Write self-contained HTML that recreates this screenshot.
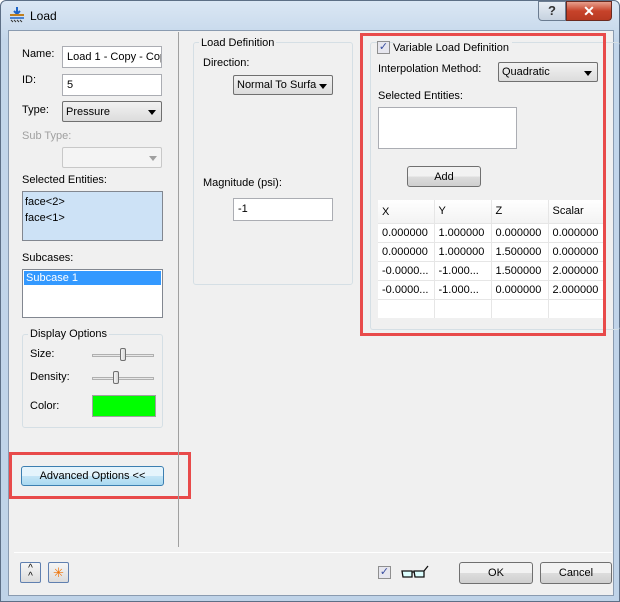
<!DOCTYPE html>
<html><head><style>
*{box-sizing:border-box}
body{margin:0;width:620px;height:602px;overflow:hidden;font-family:"Liberation Sans",sans-serif;font-size:11px;color:#000;background:#fff}
.win{position:absolute;left:0;top:0;width:620px;height:602px;background:linear-gradient(#dbe7f4,#c3d6ea 40px,#bfd3e8);border:1px solid #5d6f86;border-radius:6px 6px 0 0}
.client{position:absolute;left:7px;top:29px;width:606px;height:566px;background:#f0f0f0;border:1px solid #8a9bb0}
.a{position:absolute}
.t{position:absolute;white-space:nowrap;font-size:11px}
.inp{position:absolute;background:#fff;border:1px solid #abadb3;padding:0 4px;font-size:11px;overflow:hidden;white-space:nowrap}
.sel{position:absolute;background:linear-gradient(#f2f2f2,#dcdcdc);border:1px solid #707070;border-radius:2px;padding:0 3px;font-size:11px;white-space:nowrap;overflow:hidden}
.sel:after{content:"";position:absolute;right:5px;top:8px;border-left:4px solid transparent;border-right:4px solid transparent;border-top:5px solid #000}
.grp{position:absolute;border:1px solid #d5dfe5;border-radius:3px}
.btn{position:absolute;background:linear-gradient(#f2f2f2 50%,#dddddd 50%,#cfcfcf);border:1px solid #707070;border-radius:3px;text-align:center;font-size:11px}
.red{position:absolute;border:3px solid #e84a4a}
table{border-collapse:collapse;font-size:11px}
td{height:19px;border-right:1px solid #e6e6e6;border-bottom:1px solid #e6e6e6;padding:0 0 0 4px;white-space:nowrap;overflow:hidden}
</style></head><body>
<div class="win">
 <svg class="a" style="left:8px;top:6px" width="16" height="16" viewBox="0 0 16 16"><path d="M8 0v6M5 4l3 3 3-3" stroke="#1e64c8" stroke-width="2" fill="none"/><path d="M1 8h14" stroke="#c08020" stroke-width="2"/><path d="M1 11h14" stroke="#1e64c8" stroke-width="1.5"/><path d="M2 13l2 2M5 13l2 2M8 13l2 2M11 13l2 2" stroke="#333" stroke-width="1"/></svg>
 <div class="t" style="left:29px;top:8px;font-size:12px">Load</div>
 <div class="a" style="left:537px;top:0;width:28px;height:20px;background:linear-gradient(#e8eef5,#c6d2df);border:1px solid #6b7c91;border-radius:0 0 0 4px;text-align:center;font-weight:bold;color:#333;font-size:13px;line-height:18px">?</div>
 <div class="a" style="left:565px;top:0;width:46px;height:20px;background:linear-gradient(#e8a08e,#c7432a 50%,#b83a22);border:1px solid #6b2a20;border-radius:0 0 4px 0;text-align:center;font-weight:bold;color:#fff;font-size:14px;line-height:18px">✕</div>
 <div class="client"></div>
</div>

<!-- left panel -->
<div class="t" style="left:22px;top:48px">Name:</div>
<div class="inp" style="left:62px;top:46px;width:100px;height:22px;line-height:20px">Load 1 - Copy - Copy</div>
<div class="t" style="left:22px;top:74px">ID:</div>
<div class="inp" style="left:62px;top:74px;width:100px;height:22px;line-height:20px">5</div>
<div class="t" style="left:22px;top:104px">Type:</div>
<div class="sel" style="left:62px;top:101px;width:100px;height:21px;line-height:21px">Pressure</div>
<div class="t" style="left:22px;top:130px;color:#a0a0a0">Sub Type:</div>
<div class="a" style="left:62px;top:147px;width:100px;height:21px;border:1px solid #c8c8c8;border-radius:2px;background:#f4f4f4"><div class="a" style="right:4px;top:8px;border-left:4px solid transparent;border-right:4px solid transparent;border-top:5px solid #a0a0a0"></div></div>
<div class="t" style="left:22px;top:174px">Selected Entities:</div>
<div class="a" style="left:22px;top:191px;width:141px;height:50px;background:#cde2f6;border:1px solid #828790;padding:2px 2px;line-height:16px">face&lt;2&gt;<br>face&lt;1&gt;</div>
<div class="t" style="left:22px;top:252px">Subcases:</div>
<div class="a" style="left:22px;top:269px;width:141px;height:49px;background:#fff;border:1px solid #828790"><div style="margin:1px;background:#3399ff;color:#fff;height:14px;line-height:14px;padding-left:2px">Subcase 1</div></div>
<div class="grp" style="left:22px;top:334px;width:141px;height:94px"></div>
<div class="t" style="left:28px;top:328px;background:#f0f0f0;padding:0 2px">Display Options</div>
<div class="t" style="left:30px;top:348px">Size:</div>
<div class="a" style="left:92px;top:354px;width:62px;height:3px;border:1px solid #b0b0b0;background:#e7e7e7"></div>
<div class="a" style="left:120px;top:348px;width:6px;height:13px;border:1px solid #707070;border-radius:2px;background:linear-gradient(90deg,#f4f4f4,#d8d8d8)"></div>
<div class="t" style="left:30px;top:371px">Density:</div>
<div class="a" style="left:92px;top:377px;width:62px;height:3px;border:1px solid #b0b0b0;background:#e7e7e7"></div>
<div class="a" style="left:113px;top:371px;width:6px;height:13px;border:1px solid #707070;border-radius:2px;background:linear-gradient(90deg,#f4f4f4,#d8d8d8)"></div>
<div class="t" style="left:30px;top:400px">Color:</div>
<div class="a" style="left:92px;top:395px;width:64px;height:22px;background:#00ff00;border:1px solid #a0a0a0"></div>
<div class="red" style="left:9px;top:452px;width:182px;height:47px"></div>
<div class="a" style="left:21px;top:466px;width:143px;height:20px;border:1px solid #3c7fb1;border-radius:3px;background:linear-gradient(#e5f4fc 50%,#c4e5f6 50%,#a9d9f1);text-align:center;line-height:18px">Advanced Options &lt;&lt;</div>

<div class="a" style="left:178px;top:32px;width:1px;height:515px;background:#a0a0a0"></div>

<!-- middle -->
<div class="grp" style="left:193px;top:42px;width:160px;height:243px"></div>
<div class="t" style="left:199px;top:37px;background:#f0f0f0;padding:0 2px">Load Definition</div>
<div class="t" style="left:203px;top:57px">Direction:</div>
<div class="sel" style="left:233px;top:75px;width:100px;height:20px;line-height:19px;padding-right:16px">Normal To Surfa</div>
<div class="t" style="left:203px;top:177px">Magnitude (psi):</div>
<div class="inp" style="left:233px;top:198px;width:100px;height:23px;line-height:20px">-1</div>

<!-- right -->
<div class="grp" style="left:370px;top:42px;width:250px;height:288px;border-right:none"></div>
<div class="a" style="left:377px;top:41px;width:13px;height:13px;border:1px solid #8f8f8f;background:#e6e6ee;color:#3a4fa0;font-size:11px;line-height:11px;text-align:center">✓</div>
<div class="t" style="left:393px;top:42px;background:#f0f0f0;padding-right:3px">Variable Load Definition</div>
<div class="t" style="left:378px;top:63px">Interpolation Method:</div>
<div class="sel" style="left:498px;top:62px;width:100px;height:20px;line-height:19px">Quadratic</div>
<div class="t" style="left:378px;top:90px">Selected Entities:</div>
<div class="a" style="left:378px;top:107px;width:139px;height:42px;background:#fff;border:1px solid #abadb3"></div>
<div class="btn" style="left:407px;top:166px;width:74px;height:21px;line-height:21px">Add</div>
<div class="a" style="left:378px;top:200px;width:226px;height:118px;background:#fff;overflow:hidden">
<table style="width:240px;table-layout:fixed"><colgroup><col style="width:56px"><col style="width:57px"><col style="width:57px"><col style="width:70px"></colgroup>
<tr style="background:linear-gradient(#fff,#f3f3f3)"><td style="height:23px;padding-top:2px">X</td><td>Y</td><td>Z</td><td>Scalar</td></tr>
<tr><td>0.000000</td><td>1.000000</td><td>0.000000</td><td>0.000000</td></tr>
<tr><td>0.000000</td><td>1.000000</td><td>1.500000</td><td>0.000000</td></tr>
<tr><td>-0.0000...</td><td>-1.000...</td><td>1.500000</td><td>2.000000</td></tr>
<tr><td>-0.0000...</td><td>-1.000...</td><td>0.000000</td><td>2.000000</td></tr>
<tr><td></td><td></td><td></td><td></td></tr>
</table></div>
<div class="red" style="left:360px;top:33px;width:246px;height:303px"></div>

<!-- bottom -->
<div class="a" style="left:14px;top:552px;width:598px;height:1px;background:#a0a0a0;border-bottom:1px solid #fff"></div>
<div class="a" style="left:20px;top:562px;width:21px;height:21px;border:1px solid #6080b0;border-radius:2px;background:linear-gradient(#f6f6f6,#dcdcdc);text-align:center;font-size:10px;line-height:8px;padding-top:2px">^<br>^</div>
<div class="a" style="left:48px;top:562px;width:21px;height:21px;border:1px solid #6080b0;border-radius:2px;background:linear-gradient(#f6f6f6,#dcdcdc);color:#f07000;text-align:center;font-size:13px;line-height:19px">✳</div>
<div class="a" style="left:378px;top:566px;width:13px;height:13px;border:1px solid #8f8f8f;background:#e6e6ee;color:#3a4fa0;font-size:11px;line-height:11px;text-align:center">✓</div>
<svg class="a" style="left:400px;top:564px" width="32" height="16" viewBox="0 0 32 16"><path d="M2 7h10v6H3z M14 7h10v6H15z M12 8h2 M24 7l4-5" stroke="#111" stroke-width="1.3" fill="#dff" /></svg>
<div class="btn" style="left:459px;top:562px;width:74px;height:22px;line-height:20px">OK</div>
<div class="btn" style="left:540px;top:562px;width:72px;height:22px;line-height:20px">Cancel</div>
</body></html>
